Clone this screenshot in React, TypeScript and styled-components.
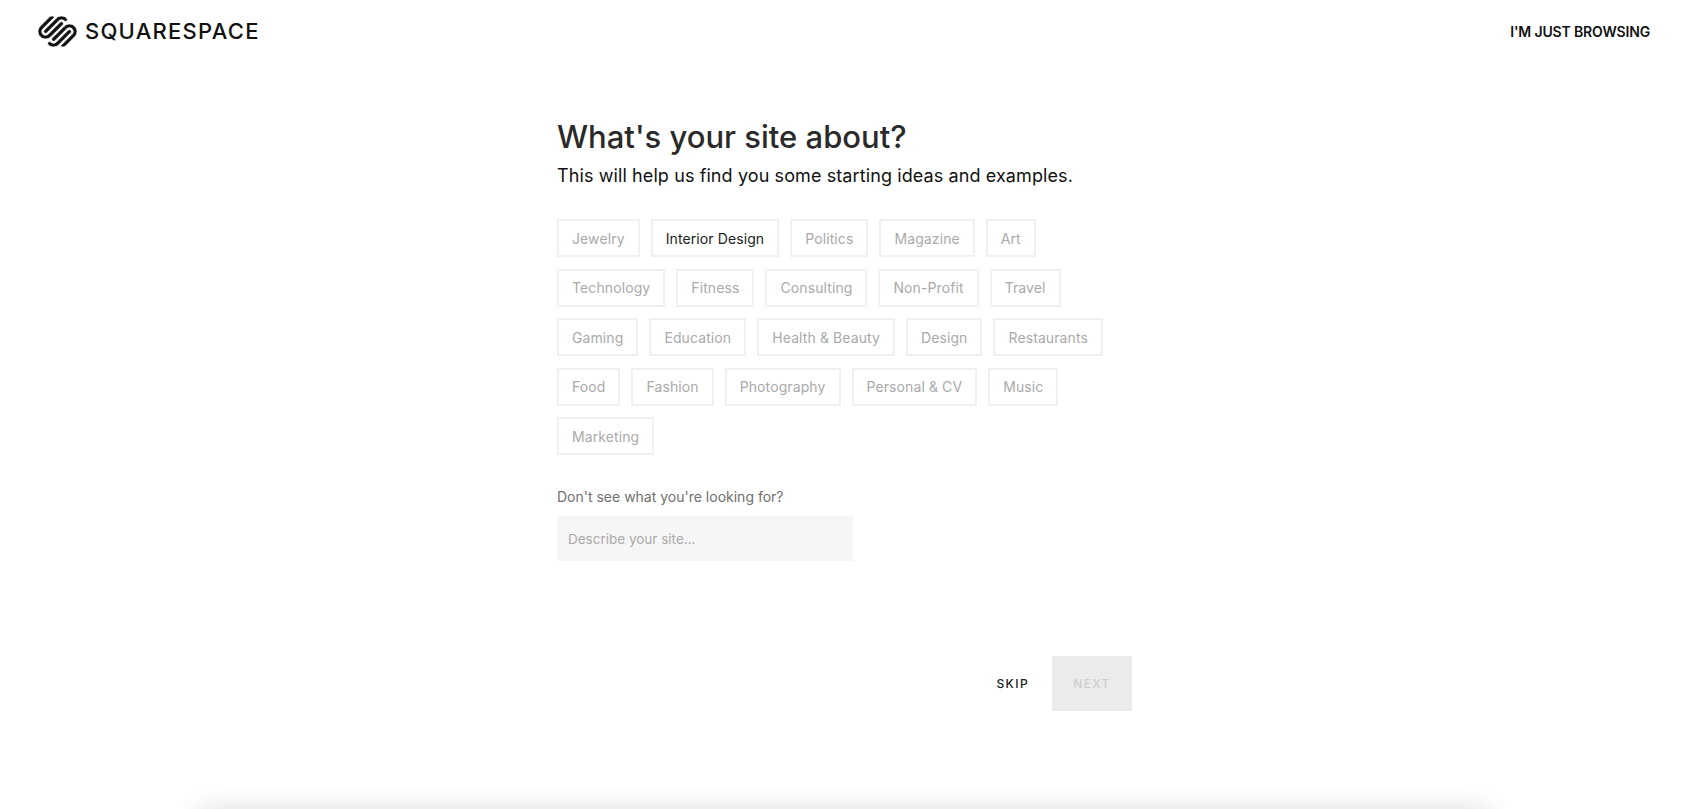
import React from "react";
import styled, { createGlobalStyle } from "styled-components";
import { SiSquarespace } from "react-icons/si";

const Global = createGlobalStyle`
  html, body { margin: 0; padding: 0; height: 809px; overflow: hidden; background: #fff; }
  body { font-family: Inter, "Liberation Sans", sans-serif; -webkit-font-smoothing: antialiased; }
  * { box-sizing: border-box; }
`;

const Page = styled.div`
  width: 1688px;
  height: 809px;
  overflow: hidden;
  display: flex;
  flex-direction: column;
`;

const Header = styled.header`
  height: 63px;
  flex: none;
  display: flex;
  align-items: center;
  justify-content: space-between;
  padding: 0 38px 0 38px;
`;

const Brand = styled.div`
  display: flex;
  align-items: center;
  gap: 8px;
  color: #111;
`;

const Logo = styled(SiSquarespace)`
  stroke: #fff;
  stroke-width: 0.45;
`;

const Wordmark = styled.span`
  font-size: 22px;
  font-weight: 500;
  letter-spacing: 1.25px;
  line-height: 1;
  padding-bottom: 1px;
`;

const Browse = styled.a`
  font-size: 14px;
  font-weight: 600;
  letter-spacing: -0.15px;
  color: #111;
`;

const Main = styled.main`
  flex: none;
  width: 575px;
  margin-left: 557px;
  padding-top: 54px;
`;

const Title = styled.h1`
  margin: 0;
  font-size: 31px;
  line-height: 40px;
  font-weight: 500;
  color: #2a2a2a;
`;

const Subtitle = styled.p`
  margin: 6px 0 0;
  font-size: 18px;
  line-height: 26px;
  letter-spacing: 0.1px;
  color: #111;
`;

const Chips = styled.div`
  margin-top: 30px;
  display: flex;
  flex-wrap: wrap;
  gap: 11.5px 11px;
  width: 560px;
`;

const Chip = styled.button<{ $active?: boolean }>`
  height: 38px;
  padding: 0 13px;
  background: #fff;
  border: 2px solid #f0f0f0;
  font-family: inherit;
  font-size: 14px;
  letter-spacing: 0.1px;
  color: ${(p) => (p.$active ? "#222" : "#aaaaaa")};
`;

const Label = styled.label`
  display: block;
  margin-top: 32px;
  font-size: 14px;
  line-height: 20px;
  color: #707070;
`;

const Describe = styled.input`
  display: block;
  margin-top: 9px;
  width: 296px;
  height: 45px;
  padding: 0 11px;
  border: none;
  outline: none;
  background: #f6f6f6;
  font-family: inherit;
  font-size: 13.5px;
  &::placeholder { color: #aaa; opacity: 1; }
`;

const Actions = styled.div`
  margin-top: 95px;
  display: flex;
  justify-content: flex-end;
  align-items: center;
  gap: 23px;
`;

const Skip = styled.button`
  border: none;
  background: none;
  padding: 0;
  font-family: inherit;
  font-size: 12px;
  font-weight: 500;
  letter-spacing: 1.4px;
  color: #222;
`;

const Next = styled.button`
  width: 80px;
  height: 55px;
  border: none;
  background: #ebebeb;
  font-family: inherit;
  font-size: 12px;
  font-weight: 500;
  letter-spacing: 1.4px;
  color: #cfcfcf;
`;

const PreviewEdge = styled.div`
  flex: none;
  margin: 100px 0 0 200px;
  width: 1288px;
  height: 40px;
  background: #fff;
  box-shadow: 0 0 28px rgba(0, 0, 0, 0.16);
`;

const rows = [
  "Jewelry", "Interior Design", "Politics", "Magazine", "Art",
  "Technology", "Fitness", "Consulting", "Non-Profit", "Travel",
  "Gaming", "Education", "Health & Beauty", "Design", "Restaurants",
  "Food", "Fashion", "Photography", "Personal & CV", "Music",
  "Marketing",
];

export default function App() {
  return (
    <Page>
      <Global />
      <Header>
        <Brand>
          <Logo size={39} />
          <Wordmark>SQUARESPACE</Wordmark>
        </Brand>
        <Browse>I'M JUST BROWSING</Browse>
      </Header>
      <Main>
        <Title>What's your site about?</Title>
        <Subtitle>This will help us find you some starting ideas and examples.</Subtitle>
        <Chips>
          {rows.map((r) => (
            <Chip key={r} $active={r === "Interior Design"}>{r}</Chip>
          ))}
        </Chips>
        <Label>Don't see what you're looking for?</Label>
        <Describe placeholder="Describe your site..." />
        <Actions>
          <Skip>SKIP</Skip>
          <Next>NEXT</Next>
        </Actions>
      </Main>
      <PreviewEdge />
    </Page>
  );
}
